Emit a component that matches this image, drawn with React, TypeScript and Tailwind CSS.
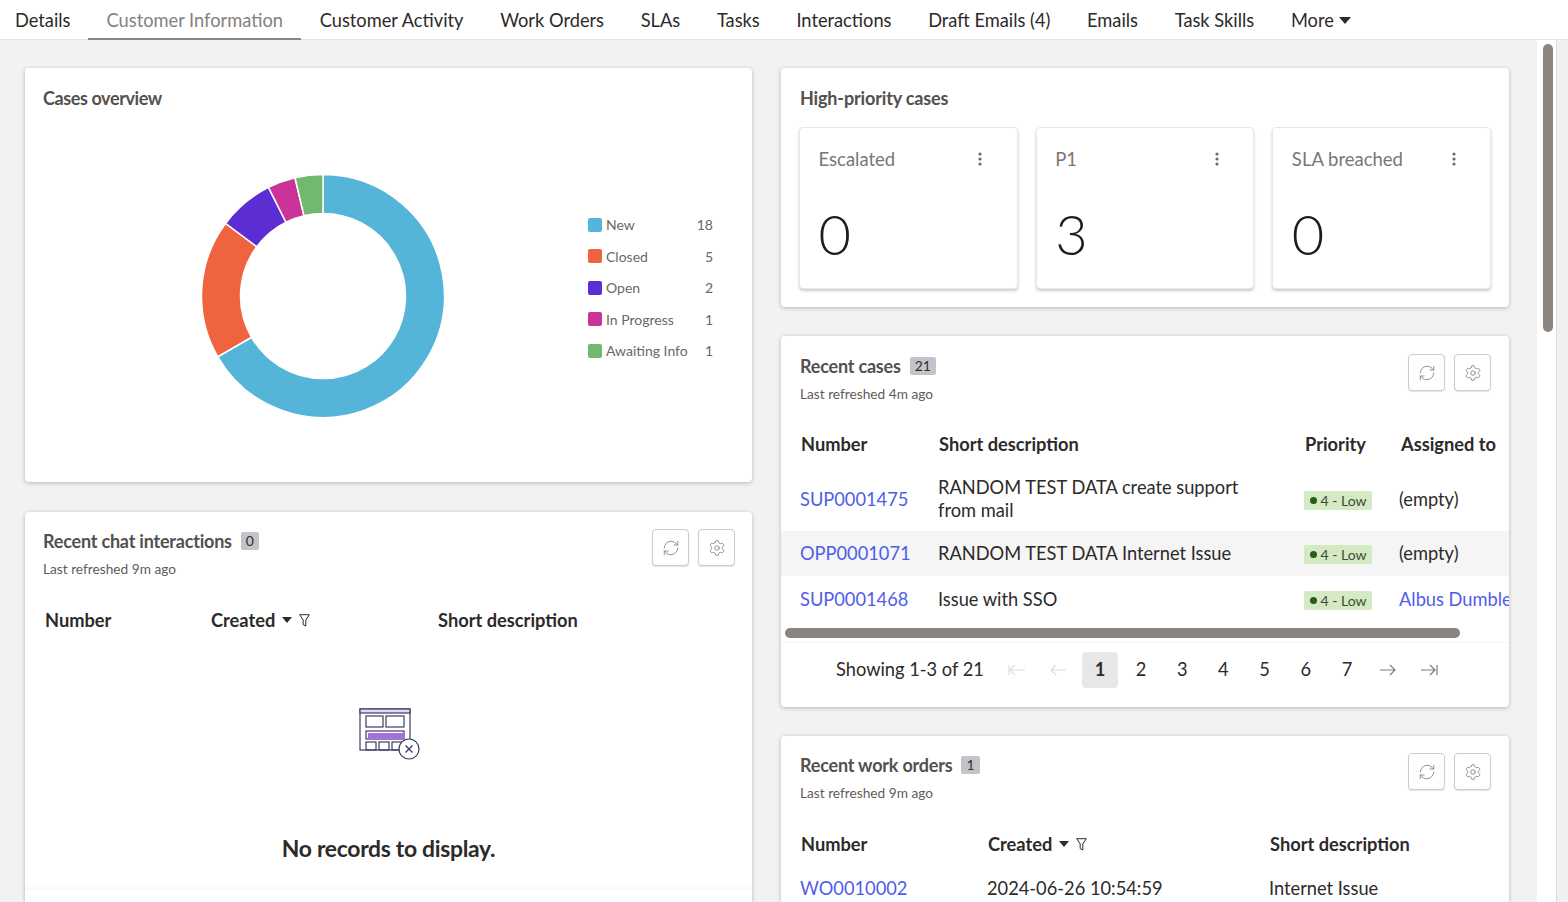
import { RefreshCw, Settings } from "lucide-react";

const tabs = ["Details", "Customer Information", "Customer Activity", "Work Orders", "SLAs", "Tasks", "Interactions", "Draft Emails (4)", "Emails", "Task Skills"];

const slices = [
  { label: "New", value: 18, color: "#54b5d9", swatch: "bg-[#54b5d9]" },
  { label: "Closed", value: 5, color: "#f0633f", swatch: "bg-[#f0633f]" },
  { label: "Open", value: 2, color: "#5c2dd3", swatch: "bg-[#5c2dd3]" },
  { label: "In Progress", value: 1, color: "#cb3399", swatch: "bg-[#cb3399]" },
  { label: "Awaiting Info", value: 1, color: "#70b96f", swatch: "bg-[#70b96f]" },
];

const cases = [
  { id: "SUP0001475", desc: "RANDOM TEST DATA create support from mail", who: "(empty)", row: "h-[66px] pt-[2px]" },
  { id: "OPP0001071", desc: "RANDOM TEST DATA Internet Issue", who: "(empty)", row: "h-[45px] bg-[#f5f5f5]" },
  { id: "SUP0001468", desc: "Issue with SSO", who: "Albus Dumbledore", row: "h-[46px]", link: true },
];

function arc(start: number, end: number): string {
  const R = 121.5;
  const r = 82.5;
  const pt = (rad: number, deg: number) => {
    const a = ((deg - 90) * Math.PI) / 180;
    return `${(122 + rad * Math.cos(a)).toFixed(2)} ${(122 + rad * Math.sin(a)).toFixed(2)}`;
  };
  const large = end - start > 180 ? 1 : 0;
  return `M${pt(R, start)} A${R} ${R} 0 ${large} 1 ${pt(R, end)} L${pt(r, end)} A${r} ${r} 0 ${large} 0 ${pt(r, start)} Z`;
}

function Donut() {
  let at = 0;
  return (
    <svg width="244" height="244" viewBox="0 0 244 244">
      {slices.map((s) => {
        const start = at;
        at += (s.value / 27) * 360;
        return <path key={s.label} d={arc(start, at)} fill={s.color} stroke="#fff" strokeWidth="1.5" />;
      })}
    </svg>
  );
}

function IconButtons() {
  return (
    <div className="flex gap-[9px]">
      <button type="button" className="flex h-[37px] w-[37px] items-center justify-center rounded-[4px] border border-[#cfcdcc] bg-white shadow-[0_1px_1px_rgba(0,0,0,0.12)]">
        <RefreshCw size={18} strokeWidth={1.1} color="#7f7a78" />
      </button>
      <button type="button" className="flex h-[37px] w-[37px] items-center justify-center rounded-[4px] border border-[#cfcdcc] bg-white shadow-[0_1px_1px_rgba(0,0,0,0.12)]">
        <Settings size={18} strokeWidth={1.1} color="#7f7a78" />
      </button>
    </div>
  );
}

function WidgetHeader({ title, count, refreshed }: { title: string; count: number; refreshed: string }) {
  return (
    <div className="flex items-start justify-between">
      <div className="-mt-[1px]">
        <div className="flex items-center gap-[9px]">
          <h2 className="text-[18px] font-bold leading-[26px] tracking-[-0.2px] text-[#54504e]">{title}</h2>
          <span className="rounded-[2px] bg-[#c3c3c9] px-[5px] text-[14px] leading-[18px] text-[#33302f]">{count}</span>
        </div>
        <p className="mt-[5px] text-[13.7px] leading-[20px] text-[#5f5b59]">{refreshed}</p>
      </div>
      <IconButtons />
    </div>
  );
}

function SortFilter() {
  return (
    <span className="ml-[7px] inline-flex items-center gap-[7px]">
      <svg width="10" height="6" viewBox="0 0 10 6"><path d="M0 0h10L5 6z" fill="#2d2a29" /></svg>
      <svg width="11" height="13" viewBox="0 0 11 13" fill="none" stroke="#2d2a29" strokeWidth="1"><path d="M.7.7h9.6L6.8 6v6L4.2 10.6V6z" /></svg>
    </span>
  );
}

function StatCard({ label, value }: { label: string; value: number }) {
  return (
    <div className="h-[162px] flex-1 rounded-[4px] border border-[#e9e8e8] bg-white pl-[18.5px] pt-[17px] shadow-[0_2px_3px_rgba(0,0,0,0.2)]">
      <div className="flex items-center justify-between pr-[34.5px]">
        <span className="text-[18.5px] leading-[28px] text-[#7b7674]">{label}</span>
        <svg width="4" height="14" viewBox="0 0 4 14" fill="#6f6a68"><circle cx="2" cy="2" r="1.6" /><circle cx="2" cy="7" r="1.6" /><circle cx="2" cy="12" r="1.6" /></svg>
      </div>
      <div className="mt-[29px] text-[56px] font-light leading-[64px] text-[#1f1c1b]">{value}</div>
    </div>
  );
}

function PriorityBadge() {
  return (
    <span className="flex h-[19px] w-[68px] items-center justify-center gap-[4px] rounded-[2px] bg-[#d3eac3] text-[14px] leading-[19px] text-[#3f4a38]">
      <span className="h-[7px] w-[7px] rounded-full bg-[#2c5a1e]" />4 - Low
    </span>
  );
}

function PagerArrow({ d, faint }: { d: string; faint?: boolean }) {
  return (
    <span className="flex w-[41px] shrink-0 justify-center">
      <svg width="18" height="14" viewBox="0 0 18 14" fill="none" stroke={faint ? "#dededd" : "#807b79"} strokeWidth="1.2">
        <path d={d} />
      </svg>
    </span>
  );
}

function EmptyIcon() {
  return (
    <svg width="62" height="53" viewBox="0 0 62 53" fill="none" stroke="#3f3b63" strokeWidth="1.2">
      <rect x="1" y="1" width="50" height="41" fill="#fff" />
      <rect x="1" y="1" width="50" height="4" fill="#e5d8f5" />
      <rect x="7" y="8" width="17" height="11" />
      <rect x="27" y="8" width="18" height="11" />
      <rect x="7" y="23" width="38" height="8" />
      <rect x="9" y="25" width="36" height="6" fill="#a76ee0" stroke="none" />
      <rect x="7" y="34" width="10" height="8" />
      <rect x="20" y="34" width="10" height="8" />
      <rect x="33" y="34" width="10" height="8" />
      <circle cx="50" cy="41" r="10" fill="#fff" />
      <path d="M46.5 37.5l7 7M53.5 37.5l-7 7" strokeWidth="1.4" />
    </svg>
  );
}

export default function App() {
  return (
    <div className="flex h-[902px] flex-col overflow-hidden bg-[#f2f2f2] font-['Lato',sans-serif] text-[#2d2a29]">
      <nav className="flex h-10 shrink-0 items-start border-b border-[#e3e3e3] bg-white">
        {tabs.map((tab) => (
          <div
            key={tab}
            className={
              tab === "Customer Information"
                ? "h-10 whitespace-nowrap border-b-2 border-[#8b8685] px-[18.5px] pt-[7px] text-[18.25px] leading-[27px] text-[#85807e]"
                : "h-10 whitespace-nowrap px-[18.33px] pt-[7px] text-[18.25px] leading-[27px] first:pl-[15px] first:pr-[17.5px]"
            }
          >
            {tab}
          </div>
        ))}
        <div className="flex h-10 items-start gap-[5px] whitespace-nowrap px-[18.33px] pt-[7px] text-[18.25px] leading-[27px]">
          More
          <svg width="12" height="7" viewBox="0 0 12 7" className="mt-[10px]"><path d="M0 0h12L6 7z" fill="#2d2a29" /></svg>
        </div>
      </nav>

      <div className="flex min-h-0 flex-1">
        <main className="flex w-[1537px] shrink-0 gap-[29px] pl-[25px] pt-[28px]">
          <div className="flex w-[727px] shrink-0 flex-col gap-[30px]">
            <section className="h-[414px] shrink-0 rounded-[4px] bg-white px-[18px] pt-[17px] shadow-[0_1px_4px_rgba(0,0,0,0.25)]">
              <h2 className="text-[18px] font-bold leading-[26px] tracking-[-0.4px] text-[#54504e]">Cases overview</h2>
              <div className="mt-[63px] flex items-start">
                <div className="ml-[158px] shrink-0">
                  <Donut />
                </div>
                <ul className="ml-[143px] w-[125px] pt-[35px]">
                  {slices.map((s) => (
                    <li key={s.label} className="flex h-[31.5px] items-center text-[14px] text-[#6c6765]">
                      <span className={`mr-[4px] h-[14px] w-[14px] rounded-[2px] ${s.swatch}`} />
                      <span className="flex-1">{s.label}</span>
                      <span>{s.value}</span>
                    </li>
                  ))}
                </ul>
              </div>
            </section>

            <section className="flex-1 rounded-t-[4px] bg-white pl-[18px] pt-[17px] shadow-[0_1px_4px_rgba(0,0,0,0.25)]">
              <div className="pr-[17px]">
                <WidgetHeader title="Recent chat interactions" count={0} refreshed="Last refreshed 9m ago" />
              </div>
              <div className="mt-[28px] flex pl-[2px] text-[18.25px] font-bold leading-[26px] text-[#2d2a29]">
                <span className="w-[166px]">Number</span>
                <span className="flex w-[227px] items-center">Created<SortFilter /></span>
                <span>Short description</span>
              </div>
              <div className="mt-[75px] flex flex-col items-center pr-[18px]">
                <div className="ml-[2px]"><EmptyIcon /></div>
                <p className="mt-[71px] text-[22.9px] font-bold leading-[32px] tracking-[-0.3px]">No records to display.</p>
              </div>
              <div className="-ml-[18px] mt-[20px] h-[6px] border-b border-[#f6f6f6] bg-gradient-to-b from-white to-[#fafafa]" />
            </section>
          </div>

          <div className="flex w-[728px] shrink-0 flex-col gap-[29px]">
            <section className="h-[239px] shrink-0 rounded-[4px] bg-white pl-[19px] pr-[18px] pt-[17px] shadow-[0_1px_4px_rgba(0,0,0,0.25)]">
              <h2 className="text-[18px] font-bold leading-[26px] tracking-[-0.15px] text-[#54504e]">High-priority cases</h2>
              <div className="-ml-[1px] mt-[16px] flex gap-[18px]">
                <StatCard label="Escalated" value={0} />
                <StatCard label="P1" value={3} />
                <StatCard label="SLA breached" value={0} />
              </div>
            </section>

            <section className="h-[371px] shrink-0 overflow-hidden rounded-[4px] bg-white pt-[18px] shadow-[0_1px_4px_rgba(0,0,0,0.25)]">
              <div className="pl-[19px] pr-[18px]">
                <WidgetHeader title="Recent cases" count={21} refreshed="Last refreshed 4m ago" />
              </div>
              <div className="mt-[27px] flex pl-[20px] text-[18.25px] font-bold leading-[26px]">
                <span className="w-[138px]">Number</span>
                <span className="w-[366px]">Short description</span>
                <span className="w-[96px]">Priority</span>
                <span className="whitespace-nowrap">Assigned to</span>
              </div>
              <div className="mt-[8px]">
                {cases.map((c) => (
                  <div
                    key={c.id}
                    className={`flex items-center overflow-hidden whitespace-nowrap pl-[19px] text-[18.25px] leading-[23px] ${c.row}`}
                  >
                    <a className="w-[138px] shrink-0 text-[#4f5ee8]">{c.id}</a>
                    <span className="w-[366px] shrink-0 whitespace-normal pr-[50px]">{c.desc}</span>
                    <span className="w-[95px] shrink-0 pt-[2px]"><PriorityBadge /></span>
                    <span className={c.link ? "text-[#4f5ee8]" : ""}>{c.who}</span>
                  </div>
                ))}
              </div>
              <div className="mt-[6px] border-b border-[#f3f3f3] pb-[4px] pl-[4px]">
                <div className="h-[10px] w-[675px] rounded-full bg-[#8b8582]" />
              </div>
              <div className="flex items-center pl-[55px] pt-[9px] text-[18.25px]">
                <span className="mr-[12px] w-[148px] whitespace-nowrap">Showing 1-3 of 21</span>
                <PagerArrow faint d="M1 2v10M17 7H2M7 2L2 7l5 5" />
                <PagerArrow faint d="M17 7H2M7 2L2 7l5 5" />
                <div className="ml-[4px] mr-[2.4px] flex h-[36px] w-[36px] items-center justify-center rounded-[4px] bg-[#e8e7e7] font-bold">1</div>
                {[2, 3, 4, 5, 6, 7].map((n) => (
                  <div key={n} className="w-[41.2px] text-center">{n}</div>
                ))}
                <PagerArrow d="M1 7h15M11 2l5 5-5 5" />
                <PagerArrow d="M1 7h14M10 2l5 5-5 5M17 2v10" />
              </div>
            </section>

            <section className="flex-1 rounded-t-[4px] bg-white pt-[17px] shadow-[0_1px_4px_rgba(0,0,0,0.25)]">
              <div className="pl-[19px] pr-[18px]">
                <WidgetHeader title="Recent work orders" count={1} refreshed="Last refreshed 9m ago" />
              </div>
              <div className="mt-[28px] flex pl-[20px] text-[18.25px] font-bold leading-[26px]">
                <span className="w-[187px]">Number</span>
                <span className="flex w-[282px] items-center">Created<SortFilter /></span>
                <span>Short description</span>
              </div>
              <div className="mt-[19px] flex pl-[19px] text-[18.25px] leading-[24px]">
                <a className="w-[187px] text-[#4f5ee8]">WO0010002</a>
                <span className="w-[282px]">2024-06-26 10:54:59</span>
                <span>Internet Issue</span>
              </div>
            </section>
          </div>
        </main>

        <aside className="flex flex-1">
          <div className="w-[20px] border-r border-[#dedede] bg-white pl-[6px] pt-[4px]">
            <div className="h-[288px] w-[10px] rounded-full bg-[#8b8582]" />
          </div>
          <div className="flex-1 bg-[#f0f0f0]" />
        </aside>
      </div>
    </div>
  );
}
